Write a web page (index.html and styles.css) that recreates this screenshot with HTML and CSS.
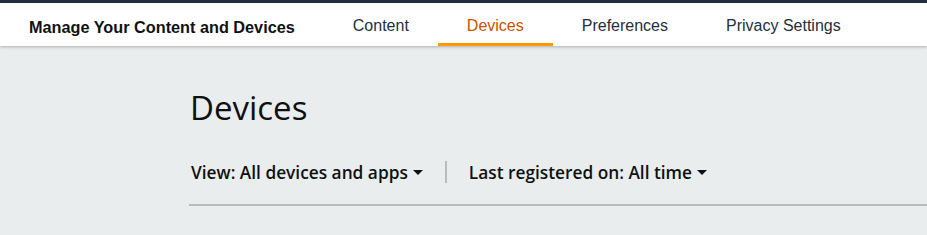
FILE: index.html
```html
<!DOCTYPE html>
<html lang="en">
<head>
<meta charset="utf-8">
<title>Manage Your Content and Devices</title>
<link rel="stylesheet" href="styles.css">
</head>
<body>
<div class="topbar"></div>
<nav class="nav">
  <div class="nav-title">Manage Your Content and Devices</div>
  <a class="tab">Content</a>
  <a class="tab active">Devices</a>
  <a class="tab">Preferences</a>
  <a class="tab">Privacy Settings</a>
</nav>
<main class="main">
  <h1 class="heading">Devices</h1>
  <div class="filters">
    <div class="filter">View: All devices and apps <span class="caret"></span></div>
    <div class="sep"></div>
    <div class="filter">Last registered on: All time <span class="caret"></span></div>
  </div>
  <div class="rule"></div>
</main>
</body>
</html>
```
FILE: styles.css
```css
html, body {
  margin: 0;
  padding: 0;
}
body {
  background: #eaeded;
  font-family: "Liberation Sans", Arial, sans-serif;
  overflow: hidden;
}
.topbar {
  height: 3px;
  background: #232f3e;
}
.nav {
  display: flex;
  align-items: stretch;
  height: 43px;
  background: #fff;
  box-shadow: 0 1px 3px rgba(0,0,0,0.25);
  position: relative;
}
.nav-title {
  display: flex;
  align-items: center;
  padding: 6px 29px 1px 29px;
  font-weight: bold;
  font-size: 16.25px;
  color: #111;
}
.tab {
  display: flex;
  align-items: center;
  padding: 6px 29px 0;
  font-size: 16px;
  color: #232f3e;
  border-bottom: 3px solid transparent;
  box-sizing: border-box;
}
.tab.active {
  color: #c45500;
  border-bottom-color: #ff9900;
}
.main {
  padding-left: 189px;
}
.heading {
  margin: 0;
  padding-top: 40px;
  font-family: "Open Sans", sans-serif;
  font-weight: 400;
  font-size: 33px;
  line-height: 44px;
  color: #0f1111;
  padding-left: 1px;
}
.filters {
  display: flex;
  align-items: center;
  margin-top: 30px;
  height: 24px;
}
.filter {
  display: flex;
  align-items: center;
  font-family: "Open Sans", sans-serif;
  font-weight: 600;
  font-size: 17.3px;
  color: #0f1111;
  padding-left: 2px;
}
.caret {
  display: inline-block;
  width: 0;
  height: 0;
  border-left: 5px solid transparent;
  border-right: 5px solid transparent;
  border-top: 5px solid #0f1111;
  margin-left: 5px;
  margin-top: 1px;
}
.sep {
  width: 2px;
  height: 22px;
  background: #bbb;
  margin: 0 20px 0 22px;
}
.rule {
  margin-top: 20px;
  height: 2px;
  background: #bbb;
}
```
